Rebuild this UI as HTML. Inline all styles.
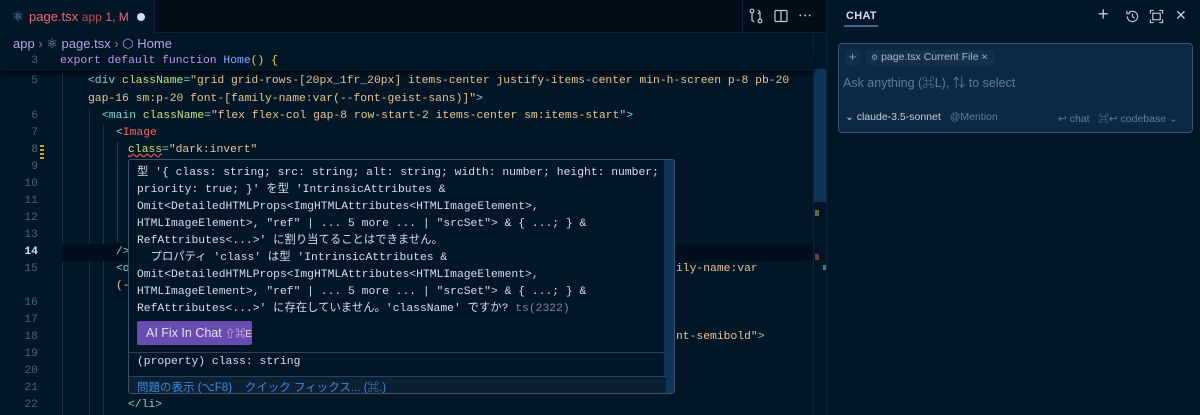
<!DOCTYPE html>
<html><head><meta charset="utf-8"><style>
*{margin:0;padding:0;box-sizing:border-box}
body{width:1200px;height:415px;overflow:hidden;background:#011627;font-family:"Liberation Sans","Noto Sans CJK JP",sans-serif;position:relative;color:#d6deeb}
.abs{position:absolute}
.mono{font-family:"Liberation Mono","Noto Sans CJK JP",monospace;font-size:11.35px;white-space:pre}
.ln{position:absolute;left:0;width:38px;text-align:right;color:#4b6479;font-family:"Liberation Mono",monospace;font-size:11.35px}
.cl{position:absolute;white-space:pre;font-family:"Liberation Mono","Noto Sans CJK JP",monospace;font-size:11.35px;color:#d6deeb}
.k{color:#c792ea}.f{color:#82aaff}.y{color:#ffd700}.t{color:#7fdbca}.a{color:#c5e478}.s{color:#ecc48d}.r{color:#ff6363}
.guide{position:absolute;width:1px;background:#1b3347}
</style></head><body>
<div class="abs" style="left:0;top:0;width:826px;height:33px;background:#010e1a;border-bottom:1px solid #0f2236"></div>
<div class="abs" style="left:0;top:0;width:155px;height:33px;background:#011627;border-right:1px solid #0f2236"></div>
<div class="abs" style="left:12px;top:9px;font-size:13px;color:#7aa6c2">⚛</div>
<div class="abs" style="left:29px;top:9px;font-size:13px;color:#ef6b6b">page.tsx <span style="font-size:12px;color:#c04a4a">app</span> <span style="font-size:12px;color:#ef6b6b">1, M</span></div>
<div class="abs" style="left:137px;top:13px;width:8px;height:8px;border-radius:50%;background:#d6deeb"></div>
<div class="abs" style="left:742px;top:0;width:1px;height:33px;background:#0f2236"></div>
<svg class="abs" style="left:748px;top:8px" width="16" height="16" viewBox="0 0 16 16" fill="none" stroke="#c5cdd6" stroke-width="1.2"><circle cx="4" cy="3" r="1.8"/><circle cx="12" cy="13" r="1.8"/><path d="M4 5v8M12 11V4M10 2l2 2-2 2M6 14l-2-2"/></svg>
<svg class="abs" style="left:773px;top:8px" width="16" height="16" viewBox="0 0 16 16" fill="none" stroke="#c5cdd6" stroke-width="1.2"><rect x="2" y="2.5" width="12" height="11" rx="1"/><path d="M8 2.5v11"/></svg>
<div class="abs" style="left:798px;top:6px;color:#c5cdd6;font-size:14px">⋯</div>
<div class="abs" style="left:13px;top:36px;font-size:13px;color:#b7a6e0">app <span style="color:#7a8a9a">›</span> <span style="color:#7aa6c2">⚛</span> page.tsx <span style="color:#7a8a9a">›</span> <span style="color:#b78cff">⬡</span> Home</div>
<div class="abs" style="left:0;top:53px;width:814px;height:18px;background:#011627;box-shadow:0 3px 4px #000a;z-index:2"></div>
<div class="ln" style="top:55px;z-index:3">3</div>
<div class="cl" style="left:60px;top:55px;z-index:3"><span class="k">export default function</span> <span class="f">Home</span><span class="y">()</span> <span class="y">{</span></div>
<div class="guide" style="left:62px;top:72px;height:343px"></div>
<div class="guide" style="left:89px;top:108px;height:307px"></div>
<div class="guide" style="left:103px;top:125px;height:290px"></div>
<div class="guide" style="left:117px;top:142px;height:100px;background:#2a4358"></div>
<div class="abs" style="left:62px;top:244px;width:752px;height:17px;background:#010f1d"></div>
<div class="ln" style="top:75px">5</div>
<div class="cl" style="left:88px;top:75px"><span class="t">&lt;div</span> <span class="a">className</span><span class="t">=</span><span class="s">"grid grid-rows-[20px_1fr_20px] items-center justify-items-center min-h-screen p-8 pb-20</span></div>
<div class="cl" style="left:88px;top:93px"><span class="s">gap-16 sm:p-20 font-[family-name:var(--font-geist-sans)]"</span><span class="t">&gt;</span></div>
<div class="ln" style="top:110px">6</div>
<div class="cl" style="left:102px;top:110px"><span class="t">&lt;main</span> <span class="a">className</span><span class="t">=</span><span class="s">"flex flex-col gap-8 row-start-2 items-center sm:items-start"</span><span class="t">&gt;</span></div>
<div class="ln" style="top:127px">7</div>
<div class="cl" style="left:116px;top:127px"><span class="t">&lt;</span><span class="r">Image</span></div>
<div class="ln" style="top:144px">8</div>
<div class="abs" style="left:40px;top:144px;width:4px;height:15px;background:repeating-linear-gradient(0deg,#c9a227 0 2px,transparent 2px 4px)"></div>
<div class="cl" style="left:128px;top:144px;text-decoration:underline wavy #ef5350"><span class="a">class</span></div>
<div class="cl" style="left:162px;top:144px"><span class="t">=</span><span class="s">"dark:invert"</span></div>
<div class="ln" style="top:161px">9</div><div class="ln" style="top:178px">10</div><div class="ln" style="top:195px">11</div><div class="ln" style="top:212px">12</div><div class="ln" style="top:229px">13</div>
<div class="ln" style="top:246px;color:#c5e4fd;font-weight:bold">14</div>
<div class="cl" style="left:116px;top:246px"><span class="t">/&gt;</span></div>
<div class="ln" style="top:263px">15</div>
<div class="cl" style="left:116px;top:263px"><span class="t">&lt;ol</span></div>
<div class="cl" style="left:676px;top:263px"><span class="s">ily-name:var</span></div>
<div class="cl" style="left:116px;top:280px"><span class="s">(-</span></div>
<div class="ln" style="top:297px">16</div><div class="ln" style="top:314px">17</div><div class="ln" style="top:331px">18</div>
<div class="cl" style="left:676px;top:331px"><span class="s">nt-semibold"</span><span class="t">&gt;</span></div>
<div class="ln" style="top:348px">19</div><div class="ln" style="top:365px">20</div><div class="ln" style="top:382px">21</div><div class="ln" style="top:399px">22</div>
<div class="cl" style="left:128px;top:399px"><span class="t">&lt;/li&gt;</span></div>
<div class="abs" style="left:814px;top:69px;width:12px;height:133px;background:#0f3558"></div>
<div class="abs" style="left:813px;top:33px;width:1px;height:382px;background:#0f2236"></div>
<div class="abs" style="left:815px;top:210px;width:4px;height:6px;background:#6b6a3a"></div>
<div class="abs" style="left:815px;top:254px;width:4px;height:6px;background:#6b3a4a"></div>
<div class="abs" style="left:823px;top:265px;width:3px;height:5px;background:#2a7ad0"></div>
<div class="abs" style="left:128px;top:159px;width:547px;height:235px;background:#011627;border:1px solid #3b5068;border-radius:3px;z-index:5;overflow:hidden">
 <div class="abs" style="right:0;top:0;width:10px;height:233px;background:#0f3558"></div>
 <div class="mono" style="position:absolute;left:8px;top:5px;line-height:17px;color:#d6deeb">型 '{ class: string; src: string; alt: string; width: number; height: number;
priority: true; }' を型 'IntrinsicAttributes &amp;
Omit&lt;DetailedHTMLProps&lt;ImgHTMLAttributes&lt;HTMLImageElement&gt;,
HTMLImageElement&gt;, "ref" | ... 5 more ... | "srcSet"&gt; &amp; { ...; } &amp;
RefAttributes&lt;...&gt;' に割り当てることはできません。
  プロパティ 'class' は型 'IntrinsicAttributes &amp;
Omit&lt;DetailedHTMLProps&lt;ImgHTMLAttributes&lt;HTMLImageElement&gt;,
HTMLImageElement&gt;, "ref" | ... 5 more ... | "srcSet"&gt; &amp; { ...; } &amp;
RefAttributes&lt;...&gt;' に存在していません。'className' ですか? <span style="color:#7a8a9a">ts(2322)</span></div>
 <div class="abs" style="left:8px;top:161px;width:115px;height:24px;background:#6a4bb0;border-radius:2px;color:#e6e0f5;font-size:12.5px;line-height:24px;padding-left:9px">AI Fix In Chat <span style="font-size:10px">⇧⌘E</span></div>
 <div class="abs" style="left:0;top:192px;width:537px;height:1px;background:#2a4358"></div>
 <div class="mono" style="position:absolute;left:8px;top:196px;color:#d6deeb">(property) class: string</div>
 <div class="abs" style="left:0;top:216px;width:537px;height:1px;background:#2a4358"></div>
 <div class="abs" style="left:0;top:217px;width:537px;height:18px;background:#0b2033"></div>
 <div class="abs" style="left:8px;top:219px;font-size:11.5px;color:#3a8ae0;font-family:'Liberation Sans','Noto Sans CJK JP',sans-serif">問題の表示 (⌥F8)&nbsp;&nbsp;&nbsp;&nbsp;クイック フィックス... (⌘.)</div>
</div>
<div class="abs" style="left:826px;top:0;width:374px;height:415px;background:#011627;border-left:1px solid #0f2236"></div>
<div class="abs" style="left:846px;top:10px;font-size:11px;font-weight:bold;color:#d6deeb;letter-spacing:.3px">CHAT</div>
<div class="abs" style="left:844px;top:25px;width:34px;height:2px;background:#3b6a8f"></div>
<div class="abs" style="left:1098px;top:4px;font-size:18px;color:#c5cdd6">+</div>
<svg class="abs" style="left:1125px;top:9px" width="15" height="15" viewBox="0 0 16 16" fill="none" stroke="#c5cdd6" stroke-width="1.2"><path d="M2.5 8a5.5 5.5 0 1 0 1.6-3.9M2 2v3h3M8 5v3l2 2"/></svg>
<svg class="abs" style="left:1149px;top:9px" width="15" height="15" viewBox="0 0 16 16" fill="none" stroke="#c5cdd6" stroke-width="1.2"><path d="M1.5 5V1.5H5M11 1.5h3.5V5M14.5 11v3.5H11M5 14.5H1.5V11"/><rect x="4" y="4.5" width="8" height="7"/></svg>
<div class="abs" style="left:1175px;top:7px;font-size:14px;color:#c5cdd6">✕</div>
<div class="abs" style="left:838px;top:43px;width:355px;height:90px;background:#0b2942;border:1px solid #3b5470;border-radius:4px"></div>
<div class="abs" style="left:845px;top:50px;width:15px;height:15px;background:#132f4a;border-radius:2px;color:#8aa0b4;font-size:13px;line-height:14px;text-align:center">+</div>
<div class="abs" style="left:866px;top:50px;width:129px;height:15px;background:#132f4a;border-radius:2px;color:#a8b8c8;font-size:10.5px;line-height:15px;padding-left:5px"><span style="font-size:8px;color:#7aa6c2">⚙</span> page.tsx Current File ×</div>
<div class="abs" style="left:843px;top:72px;font-size:12.5px;color:#5f7e97">Ask anything (⌘L), ⇅ to select</div>
<div class="abs" style="left:845px;top:111px;font-size:10.5px;color:#c5cdd6">⌄ claude-3.5-sonnet <span style="color:#5f7e97;margin-left:6px">@Mention</span></div>
<div class="abs" style="left:1058px;top:111px;font-size:10.5px;color:#5f7e97">↩ chat&nbsp;&nbsp;&nbsp;⌘↩ codebase ⌄</div>
</body></html>
